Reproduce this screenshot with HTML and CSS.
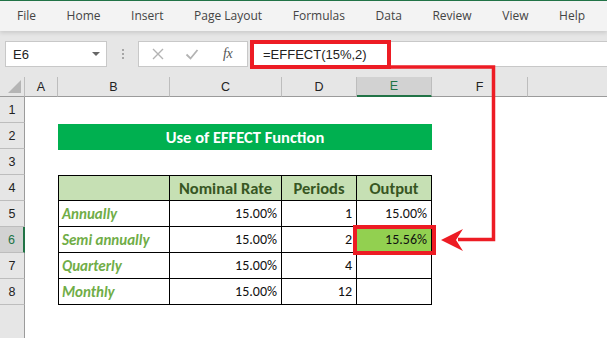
FILE: index.html
```html
<!DOCTYPE html>
<html>
<head>
<meta charset="utf-8">
<link rel="stylesheet" href="styles.css">
</head>
<body>
<div class="app">
  <div class="ribbon">
    <span class="tab">File</span>
    <span class="tab">Home</span>
    <span class="tab">Insert</span>
    <span class="tab">Page Layout</span>
    <span class="tab">Formulas</span>
    <span class="tab">Data</span>
    <span class="tab">Review</span>
    <span class="tab">View</span>
    <span class="tab">Help</span>
  </div>
  <div class="fbar">
    <div class="namebox"><span>E6</span><span class="caret"></span></div>
    <div class="dots"><i></i><i></i><i></i></div>
    <div class="fxbox">
      <svg class="ico" width="14" height="14" viewBox="0 0 14 14"><path d="M2 2 L12 12 M12 2 L2 12" stroke="#b3b3b3" stroke-width="1.4" fill="none"/></svg>
      <svg class="ico" width="14" height="14" viewBox="0 0 14 14"><path d="M1.5 7.5 L5.5 11.5 L12.5 3" stroke="#b3b3b3" stroke-width="1.8" fill="none"/></svg>
      <span class="fx">fx</span>
    </div>
    <div class="finput">=EFFECT(15%,2)</div>
  </div>
  <div class="sheet">
    <div class="corner"><span class="tri"></span></div>
    <div class="ch">A</div>
    <div class="ch">B</div>
    <div class="ch">C</div>
    <div class="ch">D</div>
    <div class="ch sel">E</div>
    <div class="ch">F</div>
    <div class="ch last"></div>

    <div class="rh r1">1</div>
    <div class="rh r2">2</div>
    <div class="rh r3">3</div>
    <div class="rh r4">4</div>
    <div class="rh r5">5</div>
    <div class="rh r6 sel">6</div>
    <div class="rh r7">7</div>
    <div class="rh r8">8</div>
    <div class="rh rest"></div>

    <div class="title">Use of EFFECT Function</div>

    <div class="c hd cb r4 first">&nbsp;</div>
    <div class="c hd cc r4">Nominal Rate</div>
    <div class="c hd cd r4">Periods</div>
    <div class="c hd ce r4">Output</div>

    <div class="c lab cb r5 first">Annually</div>
    <div class="c num cc r5">15.00%</div>
    <div class="c num cd r5">1</div>
    <div class="c num ce r5">15.00%</div>

    <div class="c lab cb r6 first">Semi annually</div>
    <div class="c num cc r6">15.00%</div>
    <div class="c num cd r6">2</div>
    <div class="c num ce r6 out">15.56%</div>

    <div class="c lab cb r7 first">Quarterly</div>
    <div class="c num cc r7">15.00%</div>
    <div class="c num cd r7">4</div>
    <div class="c num ce r7"></div>

    <div class="c lab cb r8 first">Monthly</div>
    <div class="c num cc r8">15.00%</div>
    <div class="c num cd r8">12</div>
    <div class="c num ce r8"></div>
  </div>

  <div class="mark-formula"></div>
  <div class="mark-cell"></div>
  <svg class="connector" width="607" height="338" viewBox="0 0 607 338">
    <polyline points="390,67 493.5,67 493.5,239.5 458,239.5" stroke="#ed1c24" stroke-width="3.5" fill="none"/>
    <polygon points="441,240 463,229 456,240 463,251" fill="#ed1c24"/>
  </svg>
</div>
</body>
</html>
```
FILE: styles.css
```css
* { box-sizing: border-box; }
html, body { margin: 0; padding: 0; }
body { width: 607px; height: 338px; overflow: hidden; background: #e6e6e6; }
.app { position: relative; width: 607px; height: 338px; background: #e6e6e6; font-family: "Open Sans", "Noto Sans", sans-serif; }

.ribbon {
  height: 31px;
  background: #f3f3f3;
  border-top: 1px solid #217346;
  display: flex;
  align-items: center;
  padding-left: 17px;
  padding-bottom: 1px;
  gap: 30.6px;
  font-size: 12px;
  color: #444;
  box-shadow: 0 2px 4px rgba(0,0,0,0.12);
}
.tab { white-space: nowrap; }

.fbar {
  display: flex;
  align-items: center;
  margin-top: 10px;
  height: 26px;
}
.namebox {
  margin-left: 5px;
  width: 102px;
  height: 26px;
  background: #fff;
  border: 1px solid #c8c8c8;
  display: flex;
  align-items: center;
  justify-content: space-between;
  padding: 0 6px 0 7px;
  font-family: "Liberation Sans", Arial, sans-serif;
  font-size: 13px;
  color: #222;
}
.caret { width: 0; height: 0; border-left: 4px solid transparent; border-right: 4px solid transparent; border-top: 4px solid #666; }
.dots { width: 31px; display: flex; flex-direction: column; align-items: center; gap: 2px; }
.dots i { display: block; width: 2px; height: 2px; background: #a6a6a6; }
.fxbox {
  width: 110px;
  height: 26px;
  background: #fff;
  border: 1px solid #c8c8c8;
  display: flex;
  align-items: center;
  padding-left: 12px;
  gap: 20px;
}
.fx { font-family: "Liberation Serif", "DejaVu Serif", serif; font-style: italic; font-size: 14px; color: #555; margin-left: 4px; letter-spacing: -0.5px; }
.finput {
  margin-left: 3px;
  flex: 1;
  height: 26px;
  background: #fff;
  border-top: 1px solid #c8c8c8;
  border-bottom: 1px solid #c8c8c8;
  display: flex;
  align-items: center;
  padding-left: 12px;
  font-family: "Liberation Sans", Arial, sans-serif;
  font-size: 13px;
  color: #222;
}

.sheet {
  margin-top: 10px;
  display: grid;
  grid-template-columns: 25px 33px 112px 112px 75px 75px 96px 1fr;
  grid-template-rows: 20px repeat(8, 26px) 1fr;
  height: 261px;
  background: #fff;
  font-family: "Carlito", "Lato", sans-serif;
}
.corner { grid-column: 1; grid-row: 1; background: #e6e6e6; border-right: 1px solid #bdbdbd; border-bottom: 1px solid #9b9b9b; position: relative; }
.tri { position: absolute; right: 3px; bottom: 3px; width: 0; height: 0; border-left: 13px solid transparent; border-bottom: 13px solid #b5b5b5; }
.ch {
  grid-row: 1;
  background: #e6e6e6;
  border-right: 1px solid #bdbdbd;
  border-bottom: 1px solid #9b9b9b;
  display: flex; align-items: center; justify-content: center;
  font-family: "Liberation Sans", Arial, sans-serif;
  font-size: 12.5px;
  color: #222;
}
.ch.sel { background: #d2d2d2; color: #217346; border-bottom: 2px solid #217346; }
.ch.last { border-right: none; }

.rh {
  grid-column: 1;
  background: #e6e6e6;
  border-right: 1px solid #9b9b9b;
  border-bottom: 1px solid #bdbdbd;
  display: flex; align-items: center; justify-content: center;
  font-family: "Liberation Sans", Arial, sans-serif;
  font-size: 12.5px;
  color: #222;
}
.rh.sel { background: #d2d2d2; border-right: 2px solid #217346; color: #217346; }
.rh.rest { border-bottom: none; }
.r1 { grid-row: 2; } .r2 { grid-row: 3; } .r3 { grid-row: 4; } .r4 { grid-row: 5; }
.r5 { grid-row: 6; } .r6 { grid-row: 7; } .r7 { grid-row: 8; } .r8 { grid-row: 9; }
.rest { grid-row: 10; }

.title {
  grid-column: 3 / 7;
  grid-row: 3;
  margin-top: 1px;
  height: 26px;
  background: #00b050;
  color: #fff;
  font-weight: bold;
  font-size: 16.5px;
  display: flex; align-items: center; justify-content: center;
}

.c {
  border-right: 1px solid #000;
  border-bottom: 1px solid #000;
  display: flex;
  align-items: flex-end;
  padding: 0 4px 4px 3px;
  font-size: 14px;
  color: #111;
  white-space: nowrap;
}
.c.first { border-left: 1px solid #000; }
.c.r4 { border-top: 1px solid #000; }
.cb { grid-column: 3; } .cc { grid-column: 4; } .cd { grid-column: 5; } .ce { grid-column: 6; }
.hd { background: #c6e0b4; color: #375623; font-weight: bold; font-size: 16.5px; justify-content: center; align-items: center; padding: 0; }
.lab { color: #70ad47; font-weight: bold; font-style: italic; font-size: 15px; padding-bottom: 3px; }
.num { justify-content: flex-end; }
.out { background: #92d050; }

.mark-formula {
  position: absolute;
  left: 250px; top: 40px;
  width: 141px; height: 29px;
  border: 4px solid #ed1c24;
}
.mark-cell {
  position: absolute;
  left: 353px; top: 225px;
  width: 83px; height: 30px;
  border: 4px solid #ed1c24;
}
.connector { position: absolute; left: 0; top: 0; pointer-events: none; }
```
